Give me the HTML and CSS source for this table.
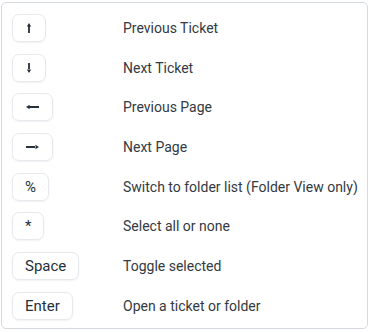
FILE: index.html
```html
<!DOCTYPE html>
<html>
<head>
<meta charset="utf-8">
<link rel="stylesheet" href="styles.css">
</head>
<body>
<div class="panel">
  <div class="row"><span class="key"><svg class="arr-v" width="8" height="10" viewBox="0 0 8 10"><path d="M4 0 L6.2 3.6 L1.8 3.6 Z M3.1 3 H4.9 V10 H3.1 Z" fill="currentColor"/></svg></span><span class="desc">Previous Ticket</span></div>
  <div class="row"><span class="key"><svg class="arr-v" width="8" height="10" viewBox="0 0 8 10"><path d="M4 10 L6.2 6.4 L1.8 6.4 Z M3.1 0 H4.9 V7 H3.1 Z" fill="currentColor"/></svg></span><span class="desc">Next Ticket</span></div>
  <div class="row"><span class="key"><svg class="arr-h" width="15" height="8" viewBox="0 0 15 8"><path d="M1 4 L4.6 1.8 L4.6 6.2 Z M4 3.1 H14 V4.9 H4 Z" fill="currentColor"/></svg></span><span class="desc">Previous Page</span></div>
  <div class="row"><span class="key"><svg class="arr-h" width="15" height="8" viewBox="0 0 15 8"><path d="M14 4 L10.4 1.8 L10.4 6.2 Z M1 3.1 H11 V4.9 H1 Z" fill="currentColor"/></svg></span><span class="desc">Next Page</span></div>
  <div class="row"><span class="key">%</span><span class="desc">Switch to folder list (Folder View only)</span></div>
  <div class="row"><span class="key">*</span><span class="desc">Select all or none</span></div>
  <div class="row"><span class="key">Space</span><span class="desc">Toggle selected</span></div>
  <div class="row"><span class="key">Enter</span><span class="desc">Open a ticket or folder</span></div>
</div>
</body>
</html>
```
FILE: styles.css
```css
html, body {
  margin: 0;
  padding: 0;
  background: #ffffff;
}
body {
  padding: 2px 3px 0 1px;
  font-family: Roboto, "Liberation Sans", sans-serif;
  font-size: 14px;
  color: #333a42;
}
.panel {
  box-sizing: border-box;
  width: 367px;
  height: 327px;
  border: 1px solid #d5dae0;
  border-radius: 5px;
  padding: 11px 10px 9px 10px;
  display: flex;
  flex-direction: column;
  gap: 11.7px;
}
.row {
  display: grid;
  grid-template-columns: 111px 1fr;
  align-items: center;
  height: 28px;
}
.key {
  box-sizing: border-box;
  justify-self: start;
  height: 28px;
  padding: 0 12px;
  border: 1px solid #e6e9ed;
  border-radius: 7px;
  box-shadow: 0 1px 2px rgba(0,0,0,0.06);
  display: flex;
  align-items: center;
  justify-content: center;
  color: #25303b;
  font-size: 15px;
}
.key svg {
  display: block;
}
.desc {
  white-space: nowrap;
}
```
